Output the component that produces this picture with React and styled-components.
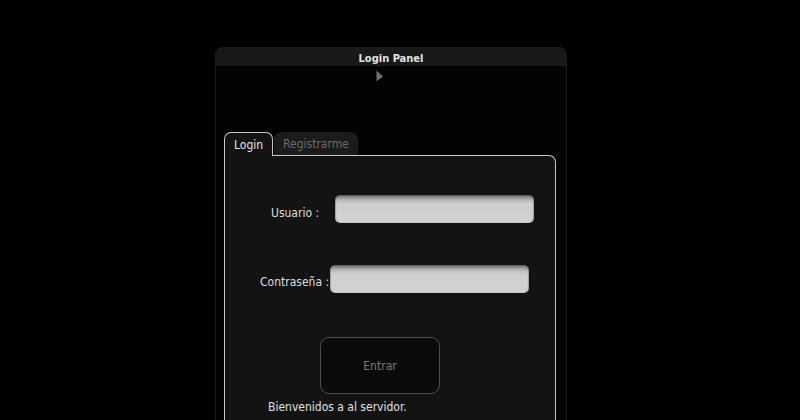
import styled, { createGlobalStyle } from "styled-components";

const Global = createGlobalStyle`
    html, body {
        margin: 0;
        padding: 0;
        background: #000;
        overflow: hidden;
    }
    body {
        font-family: "DejaVu Sans Condensed", "DejaVu Sans", Verdana, sans-serif;
    }
`;

const Page = styled.div`
    width: 800px;
    height: 420px;
    background: #000;
    display: flex;
    justify-content: center;
    padding-top: 47px;
    box-sizing: border-box;
    overflow: hidden;
`;

const Panel = styled.div`
    width: 352px;
    margin-left: -18px;
    display: flex;
    flex-direction: column;
    border-left: 1px solid #1c1c1c;
    border-right: 1px solid #1c1c1c;
    border-radius: 8px 8px 0 0;
    background: #030303;
    box-sizing: border-box;
    height: 420px;
`;

const Header = styled.div`
    height: 19px;
    background: #181a19;
    border-radius: 7px 7px 0 0;
    color: #e2e2e2;
    font-size: 11px;
    font-weight: bold;
    display: flex;
    align-items: center;
    justify-content: center;
    padding-top: 3px;
    box-sizing: border-box;
`;

const Body = styled.div`
    position: relative;
    flex: 1;
    padding: 65px 10px 0 8px;
    display: flex;
    flex-direction: column;
`;

const Cursor = styled.svg`
    position: absolute;
    left: 160px;
    top: 4px;
`;

const Tabs = styled.div`
    display: flex;
    align-items: flex-end;
    height: 24px;
`;

const Tab = styled.div`
    height: ${(p) => (p.$active ? "24px" : "23px")};
    box-sizing: border-box;
    padding: 0 ${(p) => (p.$active ? "9px" : "9px")};
    font-size: 12px;
    display: flex;
    align-items: center;
    padding-top: 1px;
    border-radius: 7px 7px 0 0;
    color: ${(p) => (p.$active ? "#e6e6e6" : "#6a6a6a")};
    background: ${(p) => (p.$active ? "#131313" : "#1b1b1b")};
    border: ${(p) => (p.$active ? "1px solid #c8c8c8" : "none")};
    border-bottom: none;
    margin-bottom: ${(p) => (p.$active ? "-1px" : "0")};
    position: relative;
    z-index: ${(p) => (p.$active ? 1 : 0)};
    margin-right: 1px;
`;

const Content = styled.div`
    flex: 1;
    background: #131313;
    border: 1px solid #c8c8c8;
    border-bottom: none;
    border-radius: 0 7px 0 0;
    display: flex;
    flex-direction: column;
`;

const Row = styled.div`
    display: flex;
    align-items: center;
    margin-top: ${(p) => p.$top}px;
    padding-left: ${(p) => p.$pad}px;
    gap: ${(p) => p.$gap}px;
`;

const Label = styled.span`
    color: #dedede;
    font-size: 12px;
    margin-top: ${(p) => p.$drop}px;
`;

const Input = styled.input`
    width: 199px;
    height: 28px;
    box-sizing: border-box;
    border: none;
    outline: none;
    border-radius: 5px;
    background: linear-gradient(
        to bottom,
        #5a5a5a 0px,
        #8a8a8a 2px,
        #b8b8b8 5px,
        #cfcfcf 9px,
        #d2d2d2 100%
    );
    box-shadow: inset 1px 0 1px rgba(0, 0, 0, 0.25), inset -1px 0 1px rgba(0, 0, 0, 0.25);
`;

const Button = styled.button`
    width: 120px;
    height: 57px;
    margin-top: 44px;
    margin-left: 95px;
    background: #0b0b0b;
    border: 1px solid #4e4e4e;
    border-radius: 9px;
    color: #7a7a7a;
    font-family: "DejaVu Sans Condensed", "DejaVu Sans", Verdana, sans-serif;
    font-size: 12px;
`;

const Welcome = styled.div`
    color: #e0e0e0;
    font-size: 12px;
    margin-top: 6px;
    padding-left: 43px;
`;

export default function App() {
    return (
        <Page>
            <Global />
            <Panel>
                <Header>Login Panel</Header>
                <Body>
                    <Cursor width="8" height="12" viewBox="0 0 8 12">
                        <path d="M0.5 0.5 L7 6.5 L0.5 11.5 Z" fill="#6e6e6e" />
                    </Cursor>
                    <Tabs>
                        <Tab $active>Login</Tab>
                        <Tab>Registrarme</Tab>
                    </Tabs>
                    <Content>
                        <Row $top={39} $pad={46} $gap={16}>
                            <Label $drop={8}>Usuario :</Label>
                            <Input type="text" />
                        </Row>
                        <Row $top={42} $pad={35} $gap={1}>
                            <Label $drop={5}>Contraseña :</Label>
                            <Input type="password" />
                        </Row>
                        <Button>Entrar</Button>
                        <Welcome>Bienvenidos a al servidor.</Welcome>
                    </Content>
                </Body>
            </Panel>
        </Page>
    );
}
